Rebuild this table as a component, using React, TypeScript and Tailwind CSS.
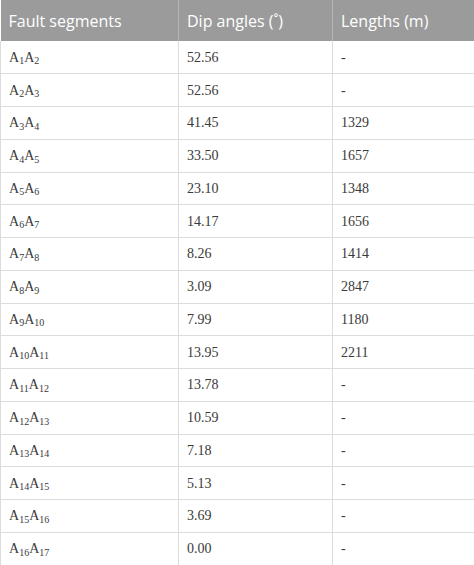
import React from 'react';

type Row = {
  a: number;
  b: number;
  dip: string;
  len: string;
};

const rows: Row[] = [
  { a: 1, b: 2, dip: '52.56', len: '-' },
  { a: 2, b: 3, dip: '52.56', len: '-' },
  { a: 3, b: 4, dip: '41.45', len: '1329' },
  { a: 4, b: 5, dip: '33.50', len: '1657' },
  { a: 5, b: 6, dip: '23.10', len: '1348' },
  { a: 6, b: 7, dip: '14.17', len: '1656' },
  { a: 7, b: 8, dip: '8.26', len: '1414' },
  { a: 8, b: 9, dip: '3.09', len: '2847' },
  { a: 9, b: 10, dip: '7.99', len: '1180' },
  { a: 10, b: 11, dip: '13.95', len: '2211' },
  { a: 11, b: 12, dip: '13.78', len: '-' },
  { a: 12, b: 13, dip: '10.59', len: '-' },
  { a: 13, b: 14, dip: '7.18', len: '-' },
  { a: 14, b: 15, dip: '5.13', len: '-' },
  { a: 15, b: 16, dip: '3.69', len: '-' },
  { a: 16, b: 17, dip: '0.00', len: '-' },
];

const Segment = ({ a, b }: { a: number; b: number }) => (
  <span>
    A<sub className="text-[10px]">{a}</sub>A<sub className="text-[10px]">{b}</sub>
  </span>
);

export default function App() {
  return (
    <div className="w-[474px] h-[565px] overflow-hidden bg-white">
      <table className="w-[474px] table-fixed border-collapse">
        <colgroup>
          <col className="w-[178px]" />
          <col className="w-[154px]" />
          <col className="w-[142px]" />
        </colgroup>
        <thead>
          <tr className="h-[41px] bg-[#9b9b9b] text-white text-[16px] font-['Open_Sans',sans-serif]">
            <th className="px-2 text-left font-normal border-r border-[#b5b5b5]">Fault segments</th>
            <th className="px-2 text-left font-normal border-r border-[#b5b5b5]">Dip angles (˚)</th>
            <th className="px-2 text-left font-normal">Lengths (m)</th>
          </tr>
        </thead>
        <tbody className="text-[14px] text-[#3a3a3a] font-['Liberation_Serif',serif]">
          {rows.map((r, i) => (
            <tr key={i} className="h-[32.75px] border-b border-[#dcdcdc]">
              <td className="px-2 border-l border-r border-[#dcdcdc]">
                <Segment a={r.a} b={r.b} />
              </td>
              <td className="px-2 border-r border-[#dcdcdc]">{r.dip}</td>
              <td className="px-2 border-r border-[#dcdcdc]">{r.len}</td>
            </tr>
          ))}
        </tbody>
      </table>
    </div>
  );
}
